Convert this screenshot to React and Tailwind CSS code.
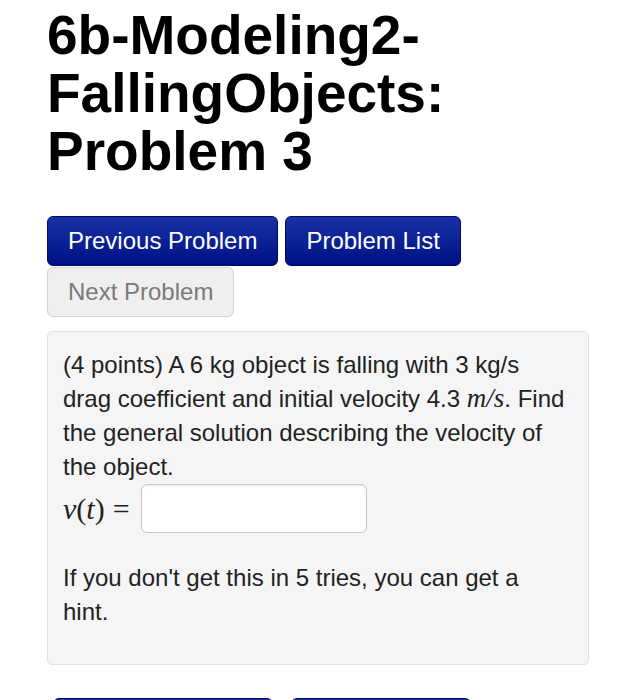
import React from 'react';

const navBtn =
  'inline-block rounded-[6px] border border-[#00086a] bg-gradient-to-b from-[#1a31a6] to-[#000f84] px-[20px] py-[7px] text-[24px] leading-[34px] text-white';

const ProblemPage = () => {
  return (
    <div className="min-h-[700px] overflow-hidden bg-white px-[47px] font-['Liberation_Sans',Arial,sans-serif] text-[#222]">
      <h1 className="pt-[6px] text-[55px] font-bold leading-[58px] text-black">
        6b-Modeling2-FallingObjects: Problem 3
      </h1>

      <div className="mt-[36px] flex flex-wrap gap-x-[7px] gap-y-px">
        <button type="button" className={navBtn}>Previous Problem</button>
        <button type="button" className={navBtn}>Problem List</button>
        <button
          type="button"
          disabled
          className="inline-block rounded-[6px] border border-[#d3d3d3] bg-[#efefef] px-[20px] py-[7px] text-[24px] leading-[34px] text-[#7a7a7a]"
        >
          Next Problem
        </button>
      </div>

      <div className="mt-[14px] rounded-[5px] border border-[#e3e3e3] bg-[#f5f5f5] pl-[15px] pr-[20px] pt-[16px] pb-[35px] text-[24px] leading-[34px]">
        <p>
          (4 points) A 6 kg object is falling with 3 kg/s drag coefficient and initial velocity 4.3{' '}
          <span className="font-['Liberation_Serif',serif] text-[27px] leading-none italic">m/s</span>. Find the general
          solution describing the velocity of the object.
        </p>

        <div className="flex h-[49px] items-center">
          <span className="font-['Liberation_Serif',serif] text-[30px] leading-none">
            <i>v</i>(<i>t</i>)<span className="ml-[8px]">=</span>
          </span>
          <input
            type="text"
            className="ml-[11px] h-[49px] w-[226px] rounded-[6px] border border-[#c8c8c8] bg-white shadow-[inset_0_1px_2px_rgba(0,0,0,0.08)] outline-none"
          />
        </div>

        <p className="mt-[28px]">If you don't get this in 5 tries, you can get a hint.</p>
      </div>

      <div className="ml-[6px] mt-[33px] flex gap-[18px]">
        <button type="button" className={`${navBtn} w-[220px] overflow-hidden whitespace-nowrap px-0 text-[20px]`}>
          Preview My Answers
        </button>
        <button type="button" className={`${navBtn} w-[180px] overflow-hidden whitespace-nowrap px-0 text-[20px]`}>
          Submit Answers
        </button>
      </div>
    </div>
  );
};

export default function App() {
  return <ProblemPage />;
}
